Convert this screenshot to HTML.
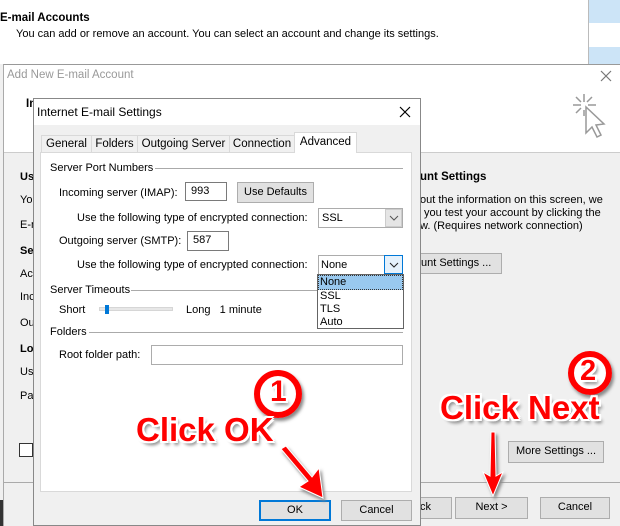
<!DOCTYPE html>
<html><head><meta charset="utf-8"><style>
*{margin:0;padding:0;box-sizing:border-box}
body{width:620px;height:526px;overflow:hidden;position:relative;background:#f0f0f0;font-family:"Liberation Sans",sans-serif;font-size:11px;color:#000}
.a{position:absolute;white-space:nowrap}
.b{font-weight:bold}
.btn{position:absolute;background:#e1e1e1;border:1px solid #adadad;text-align:center;line-height:19px}
.inp{position:absolute;background:#fff;border:1px solid #7a7a7a;padding-left:5px;line-height:17px}
.tab{position:absolute;top:135px;height:18px;border:1px solid #d9d9d9;background:#f0f0f0;line-height:17px;text-align:center;font-size:11.5px}
.red{position:absolute;font-family:"Liberation Sans",sans-serif;font-weight:bold;color:#f00;font-size:32px;white-space:nowrap;text-shadow:-2px -2px 0 #fff,2px -2px 0 #fff,-2px 2px 0 #fff,2px 2px 0 #fff,0 2px 0 #fff,0 -2px 0 #fff,2px 0 0 #fff,-2px 0 0 #fff,3px 4px 3px #888}
</style></head><body>
<div class="a" style="left:0;top:0;width:620px;height:64px;background:#fff"></div>
<div class="a" style="left:588px;top:0;width:32px;height:64px;background:#cce4f7"></div>
<div class="a" style="left:588px;top:23px;width:32px;height:24px;background:#fff"></div>
<div class="a" style="left:588px;top:0;width:1px;height:64px;background:#bbb"></div>
<div class="a b" style="left:0;top:12px;font-size:11.5px">E-mail Accounts</div>
<div class="a" style="left:16px;top:28px;font-size:11px">You can add or remove an account. You can select an account and change its settings.</div>
<div class="a" style="left:3px;top:64px;width:617px;height:462px;background:#f0f0f0;border-top:1px solid #999;border-left:1px solid #aaa"></div>
<div class="a" style="left:4px;top:65px;width:616px;height:88px;background:#fff;border-bottom:1px solid #ccc"></div>
<div class="a" style="left:7px;top:69px;color:#999;font-size:11.5px">Add New E-mail Account</div>
<svg class="a" style="left:600px;top:70px" width="12" height="12"><path d="M1 1l10 10M11 1L1 11" stroke="#777" stroke-width="1.2"/></svg>
<svg class="a" style="left:570px;top:92px" width="40" height="52"><g stroke="#999" stroke-width="1.5" fill="none"><path d="M14 2v8M14 18v6M3 13h8M18 13h8M6 5l5 5M22 5l-5 5M6 21l5-5"/><path d="M16 15v26l6-6 5 10 4-2-5-10 8-1z" fill="#fff"/></g></svg>
<div class="a b" style="left:26px;top:98px;font-size:11.5px">In</div>
<div class="a b" style="left:20px;top:171px">Us</div>
<div class="a" style="left:20px;top:194px">Yo</div>
<div class="a" style="left:20px;top:219px">E-n</div>
<div class="a b" style="left:20px;top:245px">Se</div>
<div class="a" style="left:20px;top:268px">Ac</div>
<div class="a" style="left:20px;top:291px">Inc</div>
<div class="a" style="left:20px;top:317px">Ou</div>
<div class="a b" style="left:20px;top:343px">Lo</div>
<div class="a" style="left:20px;top:366px">Us</div>
<div class="a" style="left:20px;top:390px">Pa</div>
<div class="a" style="left:19px;top:443px;width:14px;height:14px;border:1px solid #333;background:#fff"></div>
<div class="a b" style="left:420px;top:171px;font-size:11.5px">unt Settings</div>
<div class="a" style="left:420px;top:194px">out the information on this screen, we</div>
<div class="a" style="left:424px;top:207px">you test your account by clicking the</div>
<div class="a" style="left:420px;top:220px">w. (Requires network connection)</div>
<div class="btn" style="left:400px;top:253px;width:102px;height:21px;padding-left:20px;text-align:left">unt Settings ...</div>
<div class="btn" style="left:508px;top:441px;width:96px;height:22px">More Settings ...</div>
<div class="a" style="left:3px;top:482px;width:617px;height:1px;background:#aaa"></div>
<div class="btn" style="left:390px;top:497px;width:62px;height:22px;text-align:right;padding-right:20px">ck</div>
<div class="btn" style="left:455px;top:497px;width:73px;height:22px">Next &gt;</div>
<div class="btn" style="left:540px;top:497px;width:70px;height:22px">Cancel</div>
<div class="a" style="left:0;top:500px;width:3px;height:26px;background:#333"></div>
<!-- inner dialog -->
<div class="a" style="left:33px;top:98px;width:388px;height:428px;background:#f0f0f0;border:1px solid #888"></div>
<div class="a" style="left:34px;top:99px;width:386px;height:26px;background:#fff"></div>
<div class="a" style="left:37px;top:105px;font-size:12px">Internet E-mail Settings</div>
<svg class="a" style="left:399px;top:106px" width="12" height="12"><path d="M1 1l10 10M11 1L1 11" stroke="#000" stroke-width="1.2"/></svg>
<div class="a" style="left:40px;top:152px;width:372px;height:340px;background:#fff;border:1px solid #d9d9d9"></div>
<div class="tab" style="left:41px;width:51px">General</div>
<div class="tab" style="left:91px;width:47px">Folders</div>
<div class="tab" style="left:137px;width:93px">Outgoing Server</div>
<div class="tab" style="left:229px;width:66px">Connection</div>
<div class="a" style="left:294px;top:132px;width:63px;height:21px;border:1px solid #d9d9d9;border-bottom:none;background:#fff;line-height:19px;text-align:center;font-size:11.5px">Advanced</div>
<div class="a" style="left:50px;top:162px">Server Port Numbers</div>
<div class="a" style="left:155px;top:168px;width:248px;height:1px;background:#aaa"></div>
<div class="a" style="left:59px;top:187px">Incoming server (IMAP):</div>
<div class="inp" style="left:185px;top:182px;width:42px;height:19px">993</div>
<div class="btn" style="left:237px;top:182px;width:77px;height:21px">Use Defaults</div>
<div class="a" style="left:77px;top:212px">Use the following type of encrypted connection:</div>
<div class="a" style="left:318px;top:208px;width:85px;height:20px;border:1px solid #acacac;background:#fff;padding-left:3px;line-height:18px">SSL</div>
<div class="a" style="left:385px;top:209px;width:17px;height:18px;background:#e5e5e5;border:1px solid #ccc"></div>
<svg class="a" style="left:389px;top:215px" width="10" height="6"><path d="M1 1l4 4 4-4" stroke="#555" fill="none"/></svg>
<div class="a" style="left:59px;top:235px">Outgoing server (SMTP):</div>
<div class="inp" style="left:187px;top:231px;width:42px;height:20px">587</div>
<div class="a" style="left:77px;top:259px">Use the following type of encrypted connection:</div>
<div class="a" style="left:318px;top:255px;width:85px;height:20px;border:1px solid #acacac;background:#fff;padding-left:2px;line-height:18px">None</div>
<div class="a" style="left:384px;top:255px;width:19px;height:19px;background:#e5f1fb;border:1px solid #0078d7"></div>
<svg class="a" style="left:389px;top:262px" width="10" height="6"><path d="M1 1l4 4 4-4" stroke="#222" fill="none"/></svg>
<div class="a" style="left:317px;top:274px;width:87px;height:55px;border:1px solid #646464;background:#fff;line-height:13px">
<div style="background:#99c9ef;border:1px dotted #333;padding-left:1px">None</div><div style="padding-left:2px">SSL</div><div style="padding-left:2px">TLS</div><div style="padding-left:2px">Auto</div></div>
<div class="a" style="left:50px;top:284px">Server Timeouts</div>
<div class="a" style="left:131px;top:290px;width:186px;height:1px;background:#aaa"></div>
<div class="a" style="left:59px;top:304px">Short</div>
<div class="a" style="left:99px;top:307px;width:74px;height:4px;background:#e7e7e7;border:1px solid #d6d6d6"></div>
<div class="a" style="left:105px;top:305px;width:4px;height:9px;background:#0078d7"></div>
<div class="a" style="left:186px;top:304px">Long&nbsp;&nbsp;&nbsp;1 minute</div>
<div class="a" style="left:50px;top:326px">Folders</div>
<div class="a" style="left:89px;top:332px;width:314px;height:1px;background:#aaa"></div>
<div class="a" style="left:59px;top:349px">Root folder path:</div>
<div class="a" style="left:151px;top:345px;width:252px;height:20px;border:1px solid #acacac;background:#fff"></div>
<div class="btn" style="left:259px;top:500px;width:72px;height:21px;border:2px solid #0078d7;line-height:17px">OK</div>
<div class="btn" style="left:341px;top:500px;width:71px;height:21px">Cancel</div>
<svg class="a" style="left:0;top:0" width="620" height="526">
<defs><filter id="s"><feDropShadow dx="2" dy="3" stdDeviation="1.5" flood-color="#888"/></filter></defs>
<g filter="url(#s)">
<circle cx="278" cy="394" r="21" fill="#fff" stroke="#f00" stroke-width="6"/>
<circle cx="590" cy="373" r="19" fill="#fff" stroke="#f00" stroke-width="6"/>
<path d="M281 449L286 446L312 477L319 468L323 498L299 487L308 481Z" fill="#f00" stroke="#fff" stroke-width="1"/>
<path d="M491 432L495 432L496 476L503 472L493 496L483 472L490 476Z" fill="#f00" stroke="#fff" stroke-width="1"/>
</g>
</svg>
<div class="red" style="left:270px;top:375px;font-size:30px">1</div>
<div class="red" style="left:580px;top:355px;font-size:29px">2</div>
<div class="red" style="left:136px;top:411px;font-size:33px">Click OK</div>
<div class="red" style="left:440px;top:389px;font-size:33px">Click Next</div>
</body></html>
